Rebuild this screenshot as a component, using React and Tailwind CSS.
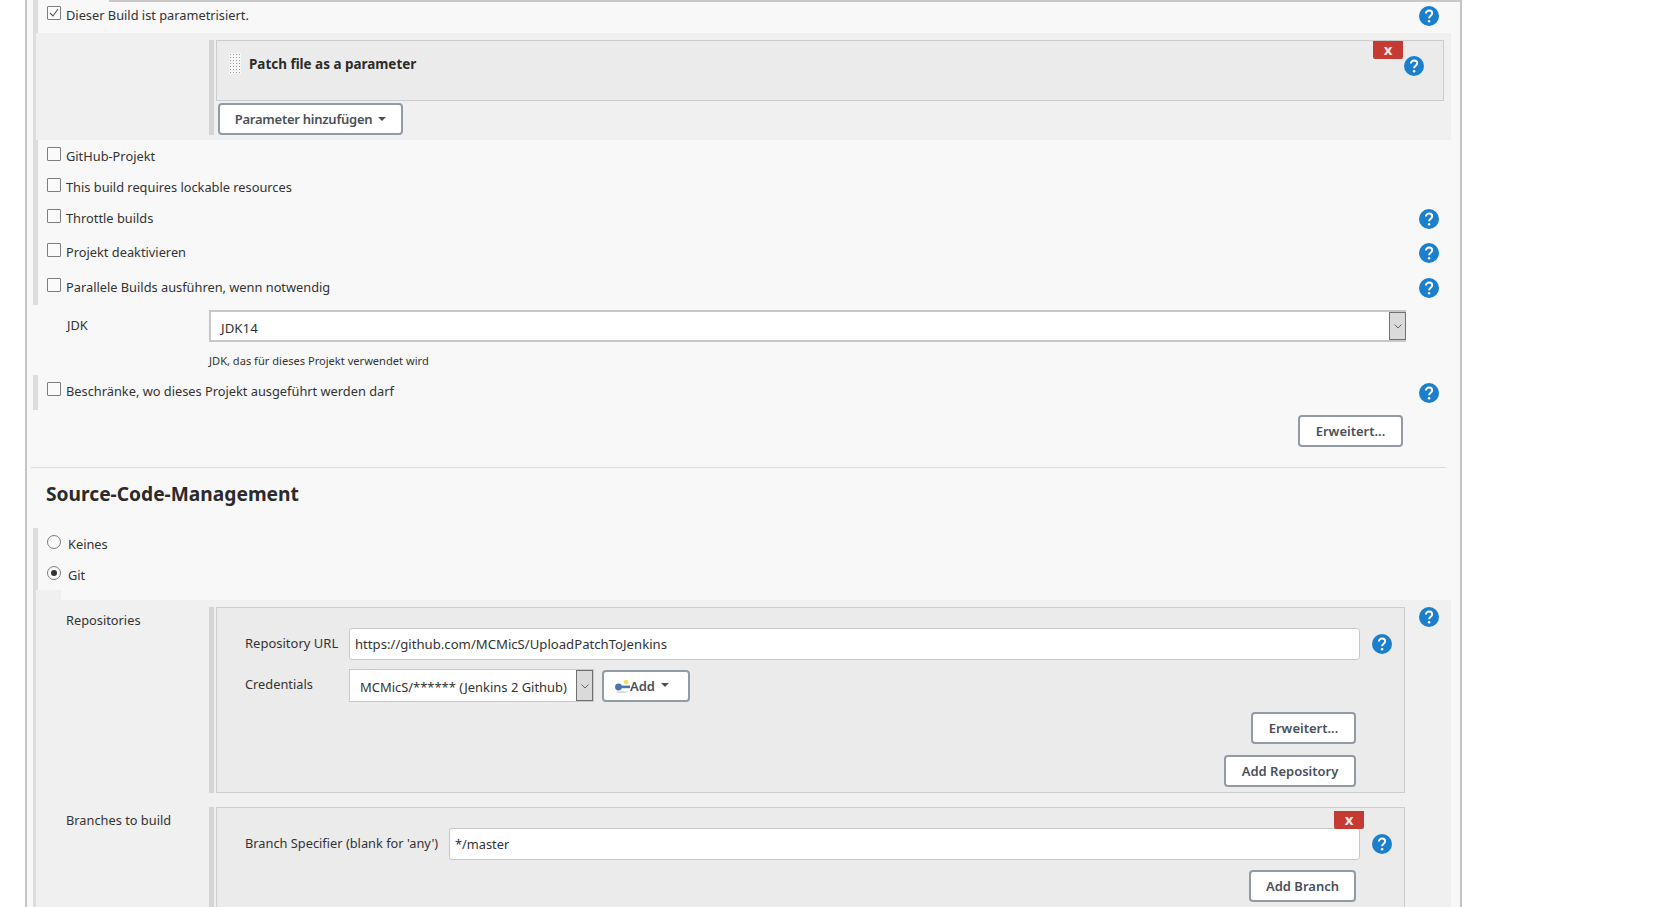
import React from "react";

const Help = ({ className = "" }) => (
  <svg className={`h-[20px] w-[20px] shrink-0 ${className}`} viewBox="0 0 20 20">
    <circle cx="10" cy="10" r="10" fill="#1b7fcc" />
    <path d="M6.9 7.6c0-1.9 1.4-3.1 3.2-3.1s3.1 1.1 3.1 2.8c0 2.4-3.1 2.6-3.1 5" fill="none" stroke="#fff" strokeWidth="1.9" />
    <circle cx="10.1" cy="15.2" r="1.25" fill="#fff" />
  </svg>
);

const Checkbox = ({ checked }) => (
  <span className="mt-[-4px] flex h-[14px] w-[14px] shrink-0 items-center justify-center rounded-[1px] border border-[#7d7d7d] bg-[#fafafa]">
    {checked && (
      <svg className="h-[10px] w-[10px]" viewBox="0 0 10 10">
        <path d="M1 5l3 3 5-7" fill="none" stroke="#555" strokeWidth="1.1" />
      </svg>
    )}
  </span>
);

const Radio = ({ checked }) => (
  <span className="mt-[-4px] flex h-[14px] w-[14px] shrink-0 items-center justify-center rounded-full border border-[#7d7d7d] bg-[#fafafa]">
    {checked && <span className="h-[6px] w-[6px] rounded-full bg-[#333]" />}
  </span>
);

const Button = ({ children, className = "" }) => (
  <button className={`flex items-center justify-center rounded-[4px] border-2 border-[#919ba5] bg-white text-[13px] font-semibold text-[#4a505a] ${className}`}>
    {children}
  </button>
);

const Caret = () => <span className="ml-[6px] mt-[-1px] h-0 w-0 border-x-[4px] border-t-[4px] border-x-transparent border-t-[#4a505a]" />;

const SelectArrow = () => (
  <span className="flex h-full w-[17px] shrink-0 items-center justify-center border border-[#707070] bg-[#dadada]">
    <svg className="h-[8px] w-[10px]" viewBox="0 0 10 8">
      <path d="M1.5 2.5L5 6l3.5-3.5" fill="none" stroke="#666" strokeWidth="1" />
    </svg>
  </span>
);

const CloseButton = ({ className = "" }) => (
  <span className={`absolute flex h-[18px] w-[30px] items-center justify-center rounded-b-[2px] bg-[#c63a34] pb-[2px] text-[15px] font-bold text-[#f5e6e5] ${className}`}>
    x
  </span>
);

const CheckRow = ({ label, height, help, checked }) => (
  <div className={`flex items-center pl-[9px] pr-[21px] ${height}`}>
    <Checkbox checked={checked} />
    <span className="ml-[5px]">{label}</span>
    {help && <Help className={`ml-auto ${help}`} />}
  </div>
);

export default function App() {
  return (
    <div className="h-[907px] overflow-hidden bg-white font-['Noto_Sans',sans-serif] text-[12.8px] leading-[18px] text-[#333]">
      <div className="ml-[25px] h-full w-[1437px] border-x-2 border-[#c4c4c4] bg-[#f8f8f8]">
        {/* General section */}
        <div className="ml-[6px] h-[305px] border-l-[5px] border-[#dddddd]">
          <div className="ml-[71px] h-[2px] bg-[#c8c8c8]" />
          <CheckRow label="Dieser Build ist parametrisiert." height="h-[31px] pb-[5px]" help="mt-[1px]" checked />

          <div className="ml-[-2px] h-[107px] w-[1415px] bg-[#f0f0f0] pl-[173px] pt-[7px]">
            <div className="flex h-[95px] border-l-[5px] border-[#d5d5d5]">
              <div className="ml-[2px] w-[1228px]">
                <div className="relative flex h-[61px] items-start border border-[#cccccc] bg-[#ebebeb] pl-[12px] pt-[12px]">
                  <span className="h-[21px] w-[12px] bg-[#f6f6f6] bg-[radial-gradient(#999999_1px,#f8f8f8_1px)] bg-[length:3px_3px]" />
                  <span className="ml-[8px] mt-[2px] text-[13.45px] font-bold text-[#2b2b2b]">Patch file as a parameter</span>
                  <CloseButton className="right-[40px] top-0" />
                  <Help className="absolute right-[19px] top-[15px]" />
                </div>
                <Button className="ml-[2px] mt-[2px] h-[32px] w-[185px] tracking-[-0.25px]">
                  Parameter hinzufügen
                  <Caret />
                </Button>
              </div>
            </div>
          </div>

          <CheckRow label="GitHub-Projekt" height="h-[32px]" />
          <CheckRow label="This build requires lockable resources" height="h-[30px]" />
          <CheckRow label="Throttle builds" height="h-[32px]" help="mt-[1px]" />
          <CheckRow label="Projekt deaktivieren" height="h-[35px]" help="mt-[3px]" />
          <CheckRow label="Parallele Builds ausführen, wenn notwendig" height="h-[36px]" help="mt-[2px]" />
        </div>

        {/* JDK */}
        <div className="flex h-[37px] pl-[40px] pt-[5px]">
          <span className="w-[142px] pt-[6px]">JDK</span>
          <div className="flex h-[32px] w-[1197px] items-center border-2 border-r-0 border-[#c8c8c8] bg-white pl-[10px]">
            <span className="mt-[3px] flex-1 text-[13.3px]">JDK14</span>
            <SelectArrow />
          </div>
        </div>
        <div className="h-[33px] pl-[182px] pt-[11px] text-[11.1px] leading-[16px]">JDK, das für dieses Projekt verwendet wird</div>

        <div className="ml-[6px] h-[35px] border-l-[5px] border-[#dddddd]">
          <CheckRow label="Beschränke, wo dieses Projekt ausgeführt werden darf" height="h-[35px] pb-[4px]" help="mt-[4px]" />
        </div>

        <div className="flex h-[37px] justify-end pr-[57px] pt-[5px]">
          <Button className="h-[32px] w-[105px]">Erweitert...</Button>
        </div>

        <div className="ml-[4px] mt-[20px] w-[1415px] border-t border-[#dcdcdc]" />

        <h2 className="ml-[19px] mt-[14px] h-[46px] text-[19.2px] font-bold leading-[24px] text-[#2b2b2b]">Source-Code-Management</h2>

        {/* Source code section */}
        <div className="relative ml-[6px] h-[379px] border-l-[5px] border-[#dddddd]">
          <div className="flex h-[30px] items-center pl-[9px] pt-[2px]">
            <Radio />
            <span className="ml-[7px]">Keines</span>
          </div>
          <div className="flex h-[32px] items-center pl-[9px] pt-[2px]">
            <Radio checked />
            <span className="ml-[7px]">Git</span>
          </div>
          <span className="absolute left-[-2px] top-[62px] h-[10px] w-[25px] bg-[#f0f0f0]" />

          <div className="ml-[-2px] mt-[10px] h-[310px] w-[1415px] bg-[#f0f0f0] pl-[173px] pt-[7px]">
            <div className="flex">
              <span className="ml-[-143px] w-[143px] pt-[4px]">Repositories</span>
              <div className="h-[186px] border-l-[5px] border-[#d5d5d5] pl-[2px]">
                <div className="h-[186px] w-[1189px] border border-[#cccccc] bg-[#ebebeb] pl-[28px] pt-[20px]">
                  <div className="flex h-[32px] items-center">
                    <span className="w-[104px] pb-[2px] text-[13px]">Repository URL</span>
                    <div className="flex h-[32px] w-[1011px] items-center rounded-[3px] border border-[#c8c8c8] bg-white pl-[5px] text-[13.15px]">
                      https://github.com/MCMicS/UploadPatchToJenkins
                    </div>
                    <Help className="ml-[12px]" />
                  </div>
                  <div className="mt-[9px] flex h-[33px] items-center">
                    <span className="w-[104px] pb-[3px]">Credentials</span>
                    <div className="flex h-[33px] w-[245px] items-center border border-[#c8c8c8] bg-white pl-[10px]">
                      <span className="mt-[2px] flex-1 whitespace-nowrap text-[12.95px]">MCMicS/****** (Jenkins 2 Github)</span>
                      <SelectArrow />
                    </div>
                    <Button className="ml-[8px] h-[32px] w-[88px] justify-start pl-[11px]">
                      <svg className="h-[16px] w-[15px] shrink-0" viewBox="0 0 15 16">
                        <circle cx="11" cy="4" r="2.2" fill="#f2e05c" />
                        <ellipse cx="7" cy="14" rx="6" ry="1" fill="#dcdcdc" />
                        <circle cx="3.5" cy="9" r="3.4" fill="#4a76ae" />
                        <rect x="5" y="7.6" width="10" height="2.6" fill="#4a76ae" />
                      </svg>
                      Add
                      <Caret />
                    </Button>
                  </div>
                  <div className="mr-[48px] mt-[10px] flex flex-col items-end gap-[11px]">
                    <Button className="h-[32px] w-[105px]">Erweitert...</Button>
                    <Button className="h-[32px] w-[132px]">Add Repository</Button>
                  </div>
                </div>
              </div>
              <Help className="ml-[14px]" />
            </div>

            <div className="mt-[14px] flex">
              <span className="ml-[-143px] w-[143px] pt-[4px]">Branches to build</span>
              <div className="h-[100px] border-l-[5px] border-[#d5d5d5] pl-[2px]">
                <div className="relative h-[110px] w-[1189px] border border-[#cccccc] bg-[#ebebeb] pl-[28px] pt-[20px]">
                  <CloseButton className="right-[40px] top-[3px]" />
                  <div className="flex h-[32px] items-center">
                    <span className="w-[204px] pb-[2px]">Branch Specifier (blank for 'any')</span>
                    <div className="flex h-[32px] w-[911px] items-center rounded-[3px] border border-[#c8c8c8] bg-white pl-[5px]">*/master</div>
                    <Help className="ml-[12px]" />
                  </div>
                  <div className="mr-[48px] mt-[10px] flex justify-end">
                    <Button className="h-[32px] w-[107px]">Add Branch</Button>
                  </div>
                </div>
              </div>
            </div>
          </div>
        </div>
      </div>
    </div>
  );
}
